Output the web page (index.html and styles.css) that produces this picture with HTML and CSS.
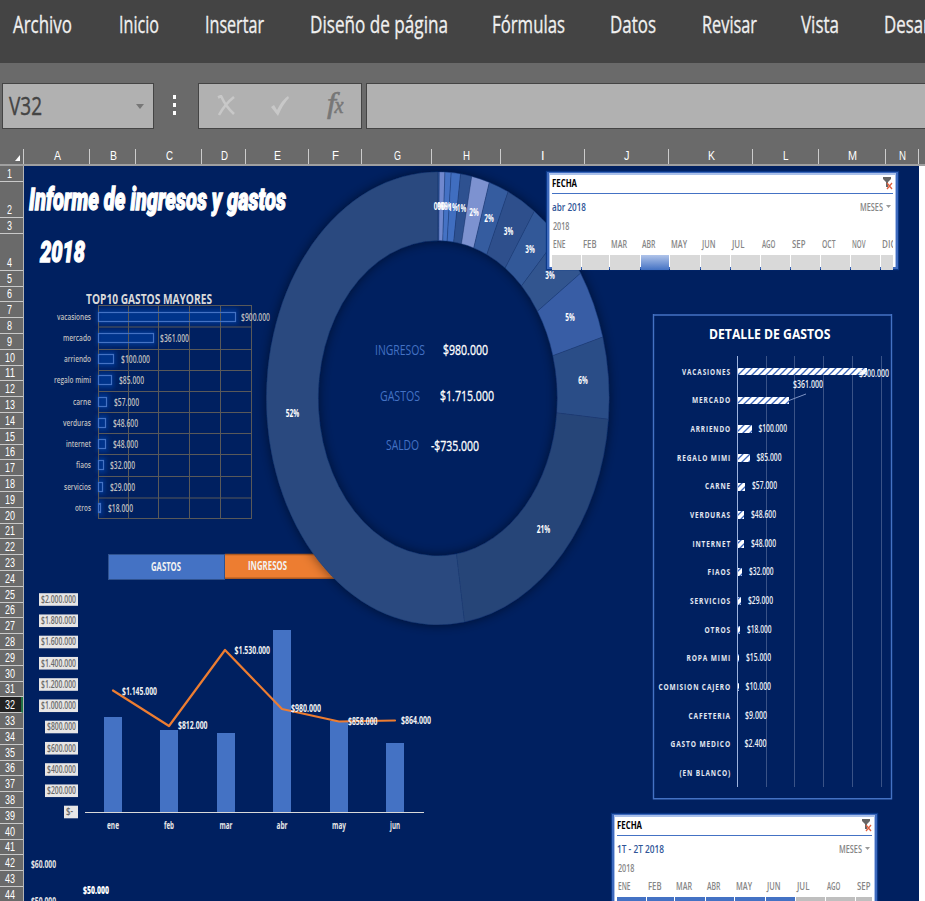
FILE: index.html
```html
<!DOCTYPE html>
<html lang="es">
<head>
<meta charset="utf-8">
<title>Informe de ingresos y gastos</title>
<link rel="stylesheet" href="styles.css">
</head>
<body>
<nav class="ribbon" id="ribbon"></nav>
<div class="formula-bar">
  <div class="box name-box"><span id="cell-name"></span><svg width="8" height="5"><path d="M0 0h8L4 5z" fill="#777"/></svg></div>
  <div class="dots"><i></i><i></i><i></i></div>
  <div class="box tools">
    <svg width="18" height="22" viewBox="0 0 18 22"><path d="M1 2.5L4 1q5 11 13 18M17 2Q8 9 2 20" fill="none" stroke="#c8c8c8" stroke-width="2.6"/></svg>
    <svg width="20" height="22" viewBox="0 0 20 22"><path d="M1 12l3-2 3 5Q12 5 18 1l1 2Q13 9 8 21z" fill="#c8c8c8"/></svg>
    <svg width="19" height="30" viewBox="0 0 19 30"><text class="fx" x="2" y="22" font-size="30" textLength="9" lengthAdjust="spacingAndGlyphs">f</text><text class="fx" x="9.5" y="22" font-size="23" textLength="9" lengthAdjust="spacingAndGlyphs">x</text></svg>
  </div>
  <div class="box formula"></div>
</div>
<div class="columns" id="columns"><div class="corner"><svg width="5" height="6"><path d="M5 0v6H0z" fill="#fff"/></svg></div></div>
<div class="body">
  <div class="rows" id="rows"></div>
  <main class="sheet">
    <svg class="charts" id="charts" width="901" height="735" viewBox="24 166 901 735"></svg>
    <section class="slicer slicer-month" id="slicer1"></section>
    <section class="slicer slicer-quarter" id="slicer2"></section>
  </main>
</div>
<script src="app.js"></script>
</body>
</html>
```
FILE: styles.css
```css
* { box-sizing: border-box; }
body { margin: 0; width: 925px; height: 901px; overflow: hidden; background: #6a6a6a; font-family: "Open Sans", "Noto Sans", sans-serif; }
svg { display: block; flex: none; }
svg text { font-family: "Open Sans", "Noto Sans", sans-serif; }
.t { overflow: visible; }
.ribbon { height: 63px; background: #444; display: flex; padding: 8px 0 0 13px; overflow: hidden; }
.ribbon text { fill: #f0f0f0; stroke: #f0f0f0; stroke-width: .3px; }
.formula-bar { height: 86px; display: flex; padding: 20px 0 0 2px; }
.box { height: 46px; background: #b1b1b1; border: 1px solid #444; display: flex; align-items: center; }
.name-box { width: 152px; justify-content: space-between; padding: 0 9px 0 6px; }
.name-box text { fill: #444; stroke: #444; stroke-width: .4px; }
.dots { width: 44px; height: 46px; display: flex; flex-direction: column; align-items: center; gap: 4px; padding-top: 12px; }
.dots i { width: 3px; height: 4px; margin-left: -3px; background: #fff; }
.tools { width: 164px; padding-left: 18px; gap: 35px; }
.tools .fx { font-family: "Liberation Serif", serif; font-style: italic; fill: #777; stroke: #777; stroke-width: .6px; }
.formula { flex: 1; margin-left: 4px; border-right: 0; }
.columns { height: 17px; display: flex; border-bottom: 2px solid #a0a0a0; }
.corner { width: 24px; flex: none; padding: 6px 0 0 15px; border-right: 1px solid #ccc; }
.col { flex: none; display: flex; justify-content: center; border-right: 1px solid #ccc; }
.col .t { margin: -1px 0 0 1px; }
.col text, .row text { font-family: "Liberation Sans", sans-serif; fill: #fff; }
.body { display: flex; height: 735px; }
.rows { width: 24px; flex: none; border-right: 1px solid #b5b5b5; overflow: hidden; }
.row { display: flex; align-items: flex-end; justify-content: center; padding: 0 4px 1px 0; border-bottom: 1.5px solid #c9c9c9; }
.row.active { background: #222; border-right: 2px solid #217346; padding-right: 2px; }
.sheet { position: relative; width: 901px; background: #002060; }
.charts { overflow: hidden; }
.charts .title { font-family: Roboto, sans-serif; font-weight: 900; font-style: italic; fill: #fff; stroke: #fff; stroke-width: 1.3px; }
.slicer { position: absolute; background: #fff; border: 2px solid #3d69bd; border-top-width: 1px; box-shadow: inset 0 2px #a9c0ea, inset 1px 0 #a9c0ea, inset -1px 0 #a9c0ea, 0 0 1px 1px #0a3888; padding: 0 3px; }
.slicer-month { left: 523px; top: 6px; width: 351px; height: 97px; }
.slicer-quarter { left: 588px; top: 648px; width: 265px; height: 97px; }
.slicer header { display: flex; justify-content: space-between; align-items: center; height: 21px; padding: 0; border-bottom: 1px solid #4472c4; }
.slicer header text { fill: #000; font-weight: 700; }
.slicer .period { display: flex; justify-content: space-between; align-items: center; height: 25px; }
.slicer .period text { fill: #2f5597; font-weight: 600; }
.slicer .level { display: flex; align-items: center; gap: 3px; padding-right: 2px; }
.slicer .level text, .slicer .year text, .slicer .months text { fill: #868686; font-weight: 600; }
.slicer .year { height: 14px; padding-left: 1px; }
.slicer .months { display: flex; overflow: hidden; }
.month { width: 29.9px; flex: none; }
.month .t { margin: 4px 0 4px 1px; }
.month i { display: block; height: 15px; margin-right: 1px; background: #d9d9d9; }
.month.on i { background: linear-gradient(#b0c4e9, #4472c4); }
.slicer-quarter .month i { background: #bfbfbf; }
.slicer-quarter .month.on i { background: #4472c4; }
```
FILE: app.js
```javascript
const $ = id => document.getElementById(id);
const at = (s, x, y, size, w, attrs = '') =>
  `<text x="${x}" y="${y}" font-size="${size}" textLength="${w}" lengthAdjust="spacingAndGlyphs" ${attrs}>${s}</text>`;
const label = (s, w, size, h) =>
  `<svg class="t" width="${w}" height="${h}">${at(s, 0, h / 2 + size * 0.36, size, w)}</svg>`;

// Ribbon: caption, caption width, gap before it
const tabs = [['Archivo', 59, 0], ['Inicio', 40, 47], ['Insertar', 59, 46], ['Diseño de página', 138, 46], ['Fórmulas', 73, 44],
  ['Datos', 46, 45], ['Revisar', 55, 46], ['Vista', 38, 44], ['Desarrollador', 108, 45]];
$('ribbon').innerHTML = tabs.map(([s, w, g]) => `<div style="margin-left:${g}px">${label(s, w, 23, 34)}</div>`).join('');
$('cell-name').innerHTML = label('V32', 33, 25, 44);

const edges = [24, 90, 136, 202, 246, 309, 362, 432, 501, 585, 669, 753, 819, 886, 919];
$('columns').innerHTML += 'ABCDEFGHIJKLMN'.split('').map((c, i) =>
  `<div class="col" style="width:${edges[i + 1] - edges[i]}px">${label(c, c === 'I' ? 3.5 : c === 'M' ? 9 : c === 'J' || c === 'L' ? 5.5 : 7, 12, 15)}</div>`).join('');

const rowEnds = [182, 218, 234, 271];
for (let n = 5; n <= 44; n++) rowEnds.push(Math.round(286.5 + 15.8 * (n - 5)));
$('rows').innerHTML = rowEnds.map((y, i) =>
  `<div class="row${i === 31 ? ' active' : ''}" style="height:${y - (i ? rowEnds[i - 1] : 166)}px">${label(i + 1, i < 9 ? 5 : 10, 13, 13)}</div>`).join('');

let out = `<defs>
<filter id="shade" x="-10%" y="-10%" width="120%" height="120%"><feDropShadow dx="0" dy="0" stdDeviation="6" flood-color="#000" flood-opacity=".5"/></filter>
<filter id="glow" x="-30" y="-30" width="300" height="80" filterUnits="userSpaceOnUse"><feGaussianBlur stdDeviation="2"/></filter>
<pattern id="stripes" width="7" height="7" patternUnits="userSpaceOnUse"><rect width="7" height="7" fill="#fff"/><path d="M-1 8L8-1M-4.5 4.5l9-9M2.5 11.5l9-9" stroke="#3a66bb" stroke-width="1.3"/></pattern>
</defs><rect x="919" y="166" width="6" height="735" fill="#fff"/>`;
out += at('Informe de ingresos y gastos', 29, 210, 31, 257, 'class="title"');
out += at('2018', 40, 262, 29, 45, 'class="title"');

// Top 10 expenses
out += at('TOP10 GASTOS MAYORES', 86, 304, 14, 126, 'fill="#d9d9d9" font-weight="700"');
const top10 = [['vacasiones', 34, 236, '$900.000', 241, 29], ['mercado', 28, 154, '$361.000', 160, 29], ['arriendo', 27, 114, '$100.000', 121, 29],
  ['regalo mimi', 37, 112, '$85.000', 119, 25], ['carne', 18, 107, '$57.000', 114, 25], ['verduras', 28, 106, '$48.600', 113, 25],
  ['internet', 25, 106, '$48.000', 113, 25], ['fiaos', 15, 104, '$32.000', 110, 25], ['servicios', 27, 103, '$29.000', 110, 25], ['otros', 16, 101, '$18.000', 108, 25]];
let grid = '';
[98.5, 128.5, 158.5, 189.5, 220.5, 251.5].forEach(x => grid += `M${x} 305V519`);
[305.5, 327, 349.5, 370.5, 391.5, 412.5, 433.5, 454.5, 476.5, 498, 518.5].forEach(y => grid += `M98 ${y}H252`);
top10.forEach(([n, w, end], i) => {
  const y = 316.5 + 21.25 * i;
  out += `<g transform="translate(98 ${y})"><rect x="-1" y="-8" width="${end - 95}" height="16" fill="#003a9a" opacity=".75" filter="url(#glow)"/></g>`;
});
out += `<path d="${grid}" stroke="#595959" fill="none"/>`;
top10.forEach(([n, w, end, v, vx, vw], i) => {
  const y = Math.round(316.5 + 21.25 * i);
  out += `<rect x="98.5" y="${y - 4.5}" width="${end - 99}" height="9" fill="none" stroke="#4472c4" stroke-width="1.2"/>`;
  out += at(n, 91 - w, y + 2.5, 9.5, w, 'fill="#bfbfbf" font-weight="600"') + at(v, vx, y + 3.5, 10, vw, 'fill="#bfbfbf" font-weight="600"');
});

// Legend
out += `<rect x="108.5" y="554.5" width="116" height="25" fill="#4472c4" stroke="#2f528f"/><rect x="225" y="554" width="125" height="25" fill="#ed7d31"/><path d="M225 554.5h125M225 578.2h125" stroke="#ae5a21" stroke-width="1.5"/>`;
out += at('GASTOS', 151, 571, 11.5, 30, 'fill="#f2f2f2" font-weight="700"') + at('INGRESOS', 248, 570, 11.5, 39, 'fill="#f2f2f2" font-weight="700"');

// Doughnut
const cx = 437.8, cy = 398.3;
const pt = (a, rx, ry) => `${(cx + rx * Math.sin(a)).toFixed(2)} ${(cy - ry * Math.cos(a)).toFixed(2)}`;
const slices = [[2.4, '#2d5296'], [9, '#6f88ce'], [10, '#4472c4'], [15, '#416ec0'], [18, '#2f5190'], [29, '#7d92d0'], [32, '#355b9f'],
  [48, '#2e508c'], [48.6, '#325898'], [57, '#31558f'], [85, '#375da5'], [100, '#2c4d87'], [361, '#264478'], [900, '#2a4a7f']];
let sum = 0, ring = '';
slices.forEach(([v, c]) => {
  const a = sum / 1715 * 2 * Math.PI; sum += v;
  const b = sum / 1715 * 2 * Math.PI, big = b - a > Math.PI ? 1 : 0;
  ring += `<path fill="${c}" stroke="#1d3b73" stroke-width=".4" d="M${pt(a, 171.3, 226.4)}A171.3 226.4 0 ${big} 1 ${pt(b, 171.3, 226.4)}L${pt(b, 119.6, 157.7)}A119.6 157.7 0 ${big} 0 ${pt(a, 119.6, 157.7)}Z"/>`;
});
out += `<g filter="url(#shade)">${ring}</g>`;
[['0%', 438.5, 206], ['0%', 442, 206], ['0%', 446, 206], ['1%', 453, 207], ['1%', 461.5, 208.5], ['2%', 474, 212], ['2%', 489, 218.5], ['3%', 508.5, 231], ['3%', 530, 249.5],
  ['3%', 550, 275.5], ['5%', 570, 317.5], ['6%', 583, 380.5], ['21%', 543.5, 529.5], ['52%', 292.5, 413.5]].forEach(([s, x, y]) => {
  const w = s.length > 2 ? 13.5 : 9.5;
  out += at(s, x - w / 2, y + 3.5, 10, w, 'fill="#fff" font-weight="700"');
});
[['INGRESOS', 375, 355, 50, '$980.000', 443, 45], ['GASTOS', 380, 401, 40, '$1.715.000', 440, 54], ['SALDO', 386, 450, 33, '-$735.000', 431, 48]].forEach(([n, x, y, w, v, vx, vw]) => {
  out += at(n, x, y, 14.5, w, 'fill="#4472c4"') + at(v, vx, y + (n === 'SALDO' ? 1 : 0), 14.5, vw, 'fill="#fff" stroke="#fff" stroke-width=".3"');
});

// Monthly columns and income line
['$2.000.000', '$1.800.000', '$1.600.000', '$1.400.000', '$1.200.000', '$1.000.000', '$800.000', '$600.000', '$400.000', '$200.000', '$-'].forEach((s, i) => {
  const y = 599.5 + 21.25 * i, x = i < 6 ? 39 : i < 10 ? 45 : 64;
  out += `<rect x="${x}" y="${y - 6.3}" width="${78 - x}" height="12.6" fill="#e7e6e6"/>` + at(s, x + 2, y + 3.3, 9.8, i < 10 ? 74 - x : 7, 'fill="#6a6a6a" font-weight="600"');
});
[['ene', 104, 717, 12], ['feb', 160, 730, 10], ['mar', 217, 733, 13], ['abr', 273, 630, 11], ['may', 330, 721, 14], ['jun', 386, 743, 10]].forEach(([s, x, y, w]) => {
  out += `<rect x="${x}" y="${y}" width="18" height="${812 - y}" fill="#4472c4"/>` + at(s, x + 9 - w / 2, 828.5, 10, w, 'fill="#e7e6e6" font-weight="700"');
});
out += `<path d="M85 812.5H424" stroke="#d9d9d9"/><path d="M113 690.5L169 726 225 650 282 709 339 721.5 395 720.5" fill="none" stroke="#ed7d31" stroke-width="2.2" stroke-linecap="round" stroke-linejoin="round"/>`;
[['$1.145.000', 122, 694.5, 35], ['$812.000', 178, 728.5, 29.5], ['$1.530.000', 234.5, 653.5, 35.5], ['$980.000', 291, 711.5, 30], ['$858.000', 348, 724.5, 29.5], ['$864.000', 401, 723.5, 30]].forEach(([s, x, y, w]) =>
  out += at(s, x, y, 9.8, w, 'fill="#f2f2f2" font-weight="700"'));
out += at('$60.000', 31, 868, 9.8, 25, 'fill="#e7e6e6" font-weight="700"') + at('$50.000', 83, 894, 9.8, 26, 'fill="#fff" font-weight="800"') + at('$50.000', 31, 904.5, 9.8, 25, 'fill="#e7e6e6" font-weight="700"');

// Expense detail
out += '<path d="M653.5 314V799.5M891.5 314V799.5M653 315H892M653 798.7H892" stroke="#4472c4" stroke-width="1.4"/>';
out += at('DETALLE DE GASTOS', 709, 339, 14.2, 121.5, 'fill="#fff" font-weight="700"');
out += '<path d="M766.5 356V787M794.5 356V787M823.5 356V787M852.5 356V787M881.5 356V787" stroke="#3a5387"/><path d="M737.5 356V787" stroke="#9db3de"/>';
[['VACASIONES', 682, 867, '$900.000', 859, 30], ['MERCADO', 692, 789, '$361.000', 793, 30], ['ARRIENDO', 690.5, 752, '$100.000', 758.5, 28.5],
  ['REGALO MIMI', 677, 750, '$85.000', 756.5, 25], ['CARNE', 705, 745, '$57.000', 752, 25], ['VERDURAS', 690, 744, '$48.600', 751, 25], ['INTERNET', 692.5, 744, '$48.000', 751, 25],
  ['FIAOS', 707.5, 742, '$32.000', 749, 24.5], ['SERVICIOS', 690, 741, '$29.000', 748, 25], ['OTROS', 704.5, 740, '$18.000', 747, 24.5], ['ROPA MIMI', 686.5, 739, '$15.000', 746, 25],
  ['COMISION CAJERO', 658.5, 739, '$10.000', 745.5, 25.5], ['CAFETERIA', 688.5, 0, '$9.000', 745, 22], ['GASTO MEDICO', 670.5, 0, '$2.400', 744.5, 22], ['(EN BLANCO)', 679.5, 0, '', 0, 0]].forEach(([n, x, end, v, vx, vw], i) => {
  const y = 371.4 + 28.65 * i;
  if (end) out += `<rect x="738" y="${Math.round(y - 3.5)}" width="${end - 738}" height="${i < 2 ? 7 : 8}" fill="url(#stripes)"/>`;
  out += at(n, x, y + 3.4, 9, 731 - x, 'fill="#e3e8f2" font-weight="700" style="letter-spacing:1.2px"');
  if (v) out += at(v, vx, (i === 0 ? 374 : i === 1 ? 384.5 : y) + 3.4, 9.8, vw, 'fill="#edf0f6" font-weight="600"');
});
out += '<path d="M789 400.5L806 394" stroke="#7d93c4"/>';
$('charts').innerHTML = out;

// Timeline slicers
const months = ['ENE', 'FEB', 'MAR', 'ABR', 'MAY', 'JUN', 'JUL', 'AGO', 'SEP', 'OCT', 'NOV', 'DIC'];
const starts = [0, 30, 58, 89, 118, 149, 179, 209, 239, 269, 299, 329, 359];
const slicer = (period, pw, on, count) => `<header>${label('FECHA', 25, 10.8, 16)}
<svg width="10" height="14" viewBox="0 0 10 14"><path d="M0 1h8v2L5 6v5H3V6L0 3z" fill="#666"/><path d="M4 7l5 6M9 7l-5 6" stroke="#e06040" stroke-width="1.3"/></svg></header>
<div class="period">${label(period, pw, 10.5, 16)}<div class="level">${label('MESES', 23, 9.8, 14)}<svg width="5" height="3"><path d="M0 0h5L2.5 3z" fill="#999"/></svg></div></div>
<div class="year">${label('2018', 16.5, 9.8, 14)}</div>
<div class="months">${months.slice(0, count).map((m, i) => `<div class="month${on(i) ? ' on' : ''}" style="width:${starts[i + 1] - starts[i]}px">${label(m, m === 'MAR' || m === 'MAY' ? 16 : m === 'ENE' || m === 'JUL' ? 12.5 : 13.5, 9.8, 14)}<i></i></div>`).join('')}</div>`;
$('slicer1').innerHTML = slicer('abr 2018', 34, i => i === 3, 12);
$('slicer2').innerHTML = slicer('1T - 2T 2018', 47, i => i < 6, 9);
```
